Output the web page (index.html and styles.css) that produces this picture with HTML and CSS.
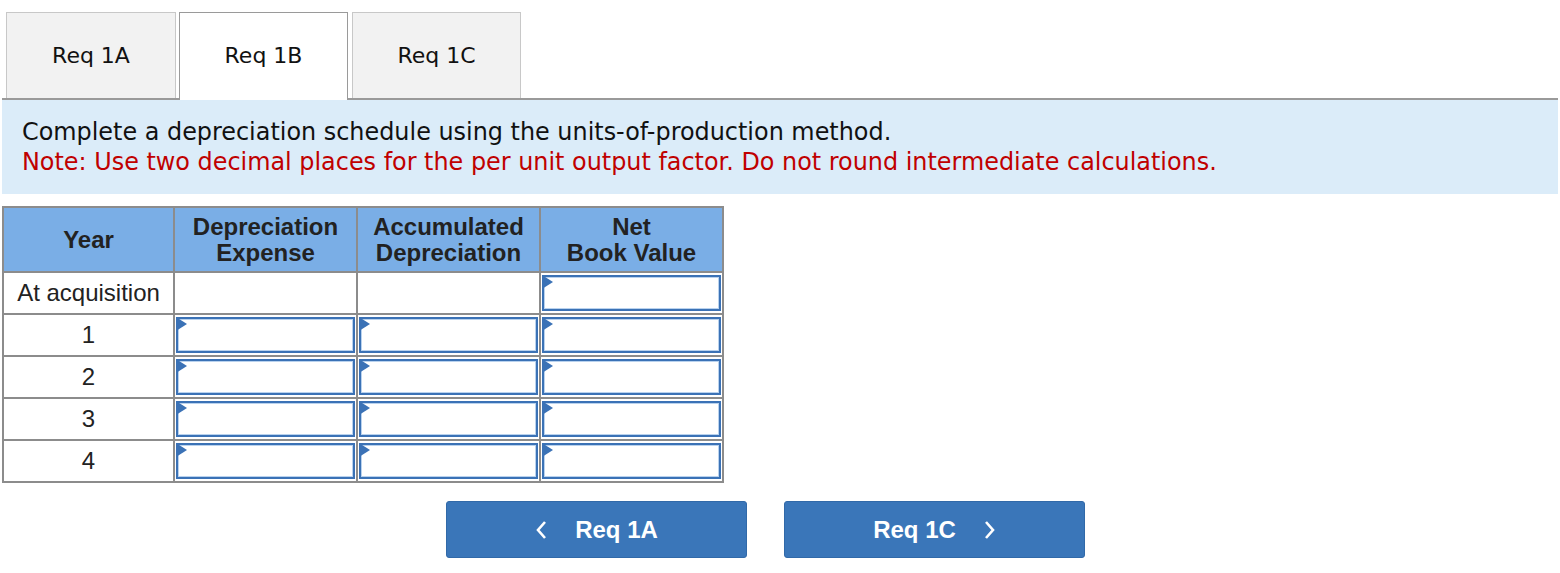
FILE: index.html
```html
<!DOCTYPE html>
<html>
<head>
    <title>Req 1B</title>
    <link rel="stylesheet" href="styles.css">
</head>
<body>
    <div class="tabs">
        <div class="tab">Req 1A</div>
        <div class="tab active">Req 1B</div>
        <div class="tab">Req 1C</div>
    </div>

    <div class="instructions">
        <p>Complete a depreciation schedule using the units-of-production method.</p>
        <p class="note">Note: Use two decimal places for the per unit output factor. Do not round intermediate calculations.</p>
    </div>

    <table class="schedule">
        <tr>
            <th class="col-year">Year</th>
            <th>Depreciation<br>Expense</th>
            <th>Accumulated<br>Depreciation</th>
            <th>Net<br>Book Value</th>
        </tr>
        <tr>
            <td class="col-year">At acquisition</td>
            <td></td>
            <td></td>
            <td class="entry"><div class="box"></div></td>
        </tr>
        <tr>
            <td class="col-year">1</td>
            <td class="entry"><div class="box"></div></td>
            <td class="entry"><div class="box"></div></td>
            <td class="entry"><div class="box"></div></td>
        </tr>
        <tr>
            <td class="col-year">2</td>
            <td class="entry"><div class="box"></div></td>
            <td class="entry"><div class="box"></div></td>
            <td class="entry"><div class="box"></div></td>
        </tr>
        <tr>
            <td class="col-year">3</td>
            <td class="entry"><div class="box"></div></td>
            <td class="entry"><div class="box"></div></td>
            <td class="entry"><div class="box"></div></td>
        </tr>
        <tr>
            <td class="col-year">4</td>
            <td class="entry"><div class="box"></div></td>
            <td class="entry"><div class="box"></div></td>
            <td class="entry"><div class="box"></div></td>
        </tr>
    </table>

    <div class="nav">
        <button type="button" class="nav-btn">
            <svg width="12" height="20" viewBox="0 0 12 20"><path d="M10 2 L3 10 L10 18" fill="none" stroke="#fff" stroke-width="2.6"/></svg>
            <span>Req 1A</span>
        </button>
        <button type="button" class="nav-btn">
            <span>Req 1C</span>
            <svg width="12" height="20" viewBox="0 0 12 20"><path d="M2 2 L9 10 L2 18" fill="none" stroke="#fff" stroke-width="2.6"/></svg>
        </button>
    </div>
</body>
</html>
```

FILE: styles.css
```css
body {
    margin: 0;
    background-color: #fff;
    font-family: 'DejaVu Sans', Verdana, sans-serif;
    color: #111;
}
.tabs {
    display: flex;
    padding: 12px 0 0 4px;
    margin: 0 2px;
    border-bottom: 2px solid #9a9a9a;
    height: 86px;
}
.tab {
    box-sizing: border-box;
    width: 169px;
    height: 86px;
    margin-right: 4px;
    display: flex;
    align-items: center;
    justify-content: center;
    background-color: #f2f2f2;
    border: 1px solid #c8c8c8;
    border-bottom: none;
    font-size: 22px;
}
.tab:first-child {
    width: 170px;
    margin-right: 3px;
}
.tab.active {
    background-color: #fff;
    border-color: #9a9a9a;
    height: 88px;
    padding-bottom: 2px;
}
.instructions {
    margin: 0 2px;
    padding: 17px 20px;
    background-color: #dbecf9;
    font-size: 23.9px;
    line-height: 30px;
}
.instructions p {
    margin: 0;
}
.note {
    color: #c00000;
}
.schedule {
    margin: 12px 0 0 2px;
    border-collapse: collapse;
    border: 2px solid #8c8c8c;
    font-family: 'Liberation Sans', Arial, sans-serif;
    font-size: 24px;
    color: #222;
}
.schedule th {
    background-color: #7aaee6;
    font-weight: bold;
    line-height: 26px;
    height: 63px;
    padding: 0;
    width: 181px;
    border: 2px solid #8c8c8c;
}
.schedule td {
    height: 38px;
    padding: 0;
    line-height: 26px;
    text-align: center;
    border: 2px solid #8c8c8c;
}
.schedule .col-year {
    width: 169px;
}
.schedule td.entry {
    padding: 1px;
}
.box {
    position: relative;
    box-sizing: border-box;
    height: 36px;
    border: 2px solid #3b72b6;
    box-shadow: inset 0 0 0 1px #b9d2ee;
}
.box::before {
    content: '';
    position: absolute;
    top: -2px;
    left: -2px;
    border-style: solid;
    border-width: 7px 0 7px 11px;
    border-color: transparent transparent transparent #3b72b6;
}
.nav {
    display: flex;
    gap: 37px;
    padding: 18px 0 0 446px;
}
.nav-btn {
    display: flex;
    align-items: center;
    justify-content: center;
    gap: 28px;
    width: 301px;
    height: 57px;
    background-color: #3a76b9;
    border: 1px solid #3169a8;
    border-radius: 3px;
    color: #fff;
    font-family: 'Liberation Sans', Arial, sans-serif;
    font-weight: bold;
    font-size: 24px;
    cursor: pointer;
}
```
